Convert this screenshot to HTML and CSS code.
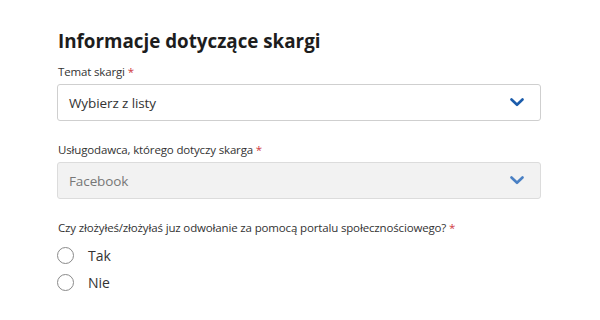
FILE: index.html
```html
<!DOCTYPE html>
<html lang="pl">
<head>
    <meta charset="UTF-8">
    <meta name="viewport" content="width=device-width, initial-scale=1.0">
    <title>Informacje dotyczące skargi</title>
    <link rel="stylesheet" href="styles.css">
</head>
<body>
    <div class="form">
        <h2 class="title">Informacje dotyczące skargi</h2>

        <div class="field">
            <label class="label" for="topic">Temat skargi <span class="req">*</span></label>
            <div class="select">
                <span class="value">Wybierz z listy</span>
                <svg class="chevron" width="14" height="9" viewBox="0 0 14 9"><path d="M1.5 1.5 L7 6.8 L12.5 1.5" fill="none" stroke="#1b5cab" stroke-width="2.6" stroke-linecap="round" stroke-linejoin="round"/></svg>
            </div>
        </div>

        <div class="field">
            <label class="label" for="provider">Usługodawca, którego dotyczy skarga <span class="req">*</span></label>
            <div class="select disabled">
                <span class="value">Facebook</span>
                <svg class="chevron" width="14" height="9" viewBox="0 0 14 9"><path d="M1.5 1.5 L7 6.8 L12.5 1.5" fill="none" stroke="#4a80c4" stroke-width="2.6" stroke-linecap="round" stroke-linejoin="round"/></svg>
            </div>
        </div>

        <div class="field">
            <div class="label">Czy złożyłeś/złożyłaś juz odwołanie za pomocą portalu społecznościowego? <span class="req">*</span></div>
            <label class="radio"><span class="circle"></span>Tak</label>
            <label class="radio"><span class="circle"></span>Nie</label>
        </div>
    </div>
</body>
</html>
```

FILE: styles.css
```css
body {
    margin: 0;
    background: #fff;
    font-family: "Open Sans", "Noto Sans", sans-serif;
    color: #333;
}

.form {
    width: 484px;
    padding: 27px 0 0 57px;
}

.title {
    margin: 0 0 0 1px;
    font-size: 18.8px;
    font-weight: 700;
    color: #1d1d1d;
    line-height: 28px;
    letter-spacing: 0;
}

.field {
    margin-top: 9px;
}

.field + .field {
    margin-top: 21px;
}

.label {
    display: block;
    margin-left: 1px;
    font-size: 11.5px;
    line-height: 16px;
    color: #333;
    letter-spacing: -0.15px;
}

.req {
    color: #d0393f;
}

.select {
    display: flex;
    align-items: center;
    justify-content: space-between;
    box-sizing: border-box;
    height: 37px;
    margin-top: 4px;
    padding: 0 16px 0 11px;
    border: 1px solid #cfcfcf;
    border-radius: 3px;
    background: #fff;
}

.select.disabled {
    background: #f2f2f2;
    border-color: #dcdcdc;
}

.value {
    font-size: 13.5px;
    color: #333;
    letter-spacing: -0.1px;
}

.disabled .value {
    color: #777;
}

.radio {
    display: flex;
    align-items: center;
    height: 27px;
    font-size: 14px;
    color: #333;
}

.radio:first-of-type {
    margin-top: 6px;
}

.circle {
    box-sizing: border-box;
    width: 17px;
    height: 17px;
    margin-right: 14px;
    border: 1.5px solid #8a8a8a;
    border-radius: 50%;
}
```
